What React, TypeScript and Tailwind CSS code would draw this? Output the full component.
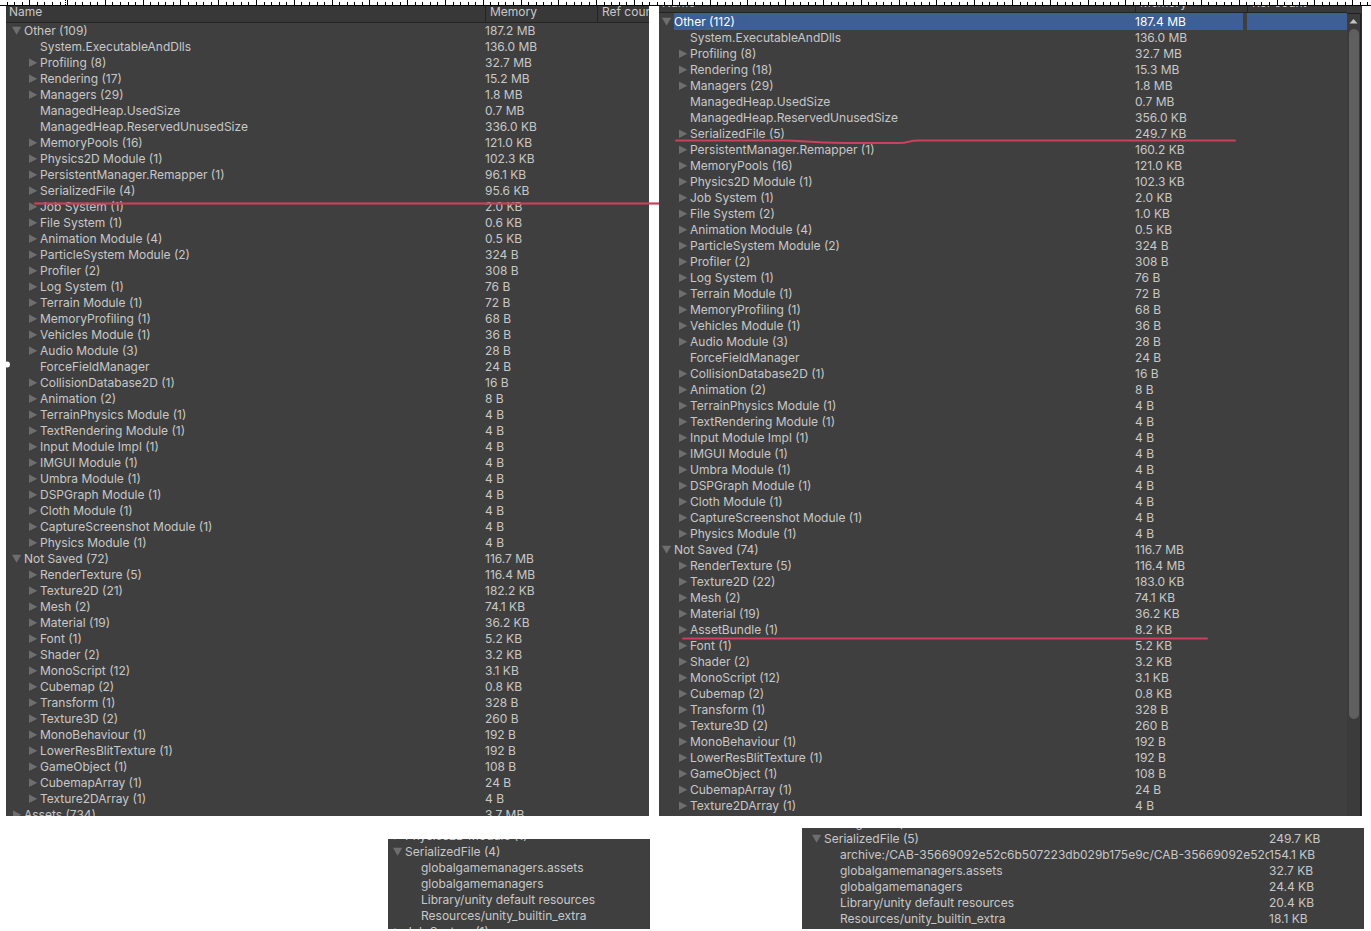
import React from 'react';
import clsx from 'clsx';

interface MemoryRow {
  name: string;
  memory: string;
  depth: 0 | 1;
  fold?: 'open' | 'closed';
  selected?: boolean;
}

const group = (name: string, memory: string, selected = false): MemoryRow => ({ name, memory, depth: 0, fold: 'open', selected });
const item = (name: string, memory: string): MemoryRow => ({ name, memory, depth: 1, fold: 'closed' });
const leaf = (name: string, memory: string): MemoryRow => ({ name, memory, depth: 1 });

const beforeRows: MemoryRow[] = [
  group('Other (109)', '187.2 MB'),
  leaf('System.ExecutableAndDlls', '136.0 MB'),
  item('Profiling (8)', '32.7 MB'),
  item('Rendering (17)', '15.2 MB'),
  item('Managers (29)', '1.8 MB'),
  leaf('ManagedHeap.UsedSize', '0.7 MB'),
  leaf('ManagedHeap.ReservedUnusedSize', '336.0 KB'),
  item('MemoryPools (16)', '121.0 KB'),
  item('Physics2D Module (1)', '102.3 KB'),
  item('PersistentManager.Remapper (1)', '96.1 KB'),
  item('SerializedFile (4)', '95.6 KB'),
  item('Job System (1)', '2.0 KB'),
  item('File System (1)', '0.6 KB'),
  item('Animation Module (4)', '0.5 KB'),
  item('ParticleSystem Module (2)', '324 B'),
  item('Profiler (2)', '308 B'),
  item('Log System (1)', '76 B'),
  item('Terrain Module (1)', '72 B'),
  item('MemoryProfiling (1)', '68 B'),
  item('Vehicles Module (1)', '36 B'),
  item('Audio Module (3)', '28 B'),
  leaf('ForceFieldManager', '24 B'),
  item('CollisionDatabase2D (1)', '16 B'),
  item('Animation (2)', '8 B'),
  item('TerrainPhysics Module (1)', '4 B'),
  item('TextRendering Module (1)', '4 B'),
  item('Input Module Impl (1)', '4 B'),
  item('IMGUI Module (1)', '4 B'),
  item('Umbra Module (1)', '4 B'),
  item('DSPGraph Module (1)', '4 B'),
  item('Cloth Module (1)', '4 B'),
  item('CaptureScreenshot Module (1)', '4 B'),
  item('Physics Module (1)', '4 B'),
  group('Not Saved (72)', '116.7 MB'),
  item('RenderTexture (5)', '116.4 MB'),
  item('Texture2D (21)', '182.2 KB'),
  item('Mesh (2)', '74.1 KB'),
  item('Material (19)', '36.2 KB'),
  item('Font (1)', '5.2 KB'),
  item('Shader (2)', '3.2 KB'),
  item('MonoScript (12)', '3.1 KB'),
  item('Cubemap (2)', '0.8 KB'),
  item('Transform (1)', '328 B'),
  item('Texture3D (2)', '260 B'),
  item('MonoBehaviour (1)', '192 B'),
  item('LowerResBlitTexture (1)', '192 B'),
  item('GameObject (1)', '108 B'),
  item('CubemapArray (1)', '24 B'),
  item('Texture2DArray (1)', '4 B'),
  { name: 'Assets (734)', memory: '3.7 MB', depth: 0, fold: 'closed' },
];

const afterRows: MemoryRow[] = [
  group('Other (112)', '187.4 MB', true),
  leaf('System.ExecutableAndDlls', '136.0 MB'),
  item('Profiling (8)', '32.7 MB'),
  item('Rendering (18)', '15.3 MB'),
  item('Managers (29)', '1.8 MB'),
  leaf('ManagedHeap.UsedSize', '0.7 MB'),
  leaf('ManagedHeap.ReservedUnusedSize', '356.0 KB'),
  item('SerializedFile (5)', '249.7 KB'),
  item('PersistentManager.Remapper (1)', '160.2 KB'),
  item('MemoryPools (16)', '121.0 KB'),
  item('Physics2D Module (1)', '102.3 KB'),
  item('Job System (1)', '2.0 KB'),
  item('File System (2)', '1.0 KB'),
  item('Animation Module (4)', '0.5 KB'),
  item('ParticleSystem Module (2)', '324 B'),
  item('Profiler (2)', '308 B'),
  item('Log System (1)', '76 B'),
  item('Terrain Module (1)', '72 B'),
  item('MemoryProfiling (1)', '68 B'),
  item('Vehicles Module (1)', '36 B'),
  item('Audio Module (3)', '28 B'),
  leaf('ForceFieldManager', '24 B'),
  item('CollisionDatabase2D (1)', '16 B'),
  item('Animation (2)', '8 B'),
  item('TerrainPhysics Module (1)', '4 B'),
  item('TextRendering Module (1)', '4 B'),
  item('Input Module Impl (1)', '4 B'),
  item('IMGUI Module (1)', '4 B'),
  item('Umbra Module (1)', '4 B'),
  item('DSPGraph Module (1)', '4 B'),
  item('Cloth Module (1)', '4 B'),
  item('CaptureScreenshot Module (1)', '4 B'),
  item('Physics Module (1)', '4 B'),
  group('Not Saved (74)', '116.7 MB'),
  item('RenderTexture (5)', '116.4 MB'),
  item('Texture2D (22)', '183.0 KB'),
  item('Mesh (2)', '74.1 KB'),
  item('Material (19)', '36.2 KB'),
  item('AssetBundle (1)', '8.2 KB'),
  item('Font (1)', '5.2 KB'),
  item('Shader (2)', '3.2 KB'),
  item('MonoScript (12)', '3.1 KB'),
  item('Cubemap (2)', '0.8 KB'),
  item('Transform (1)', '328 B'),
  item('Texture3D (2)', '260 B'),
  item('MonoBehaviour (1)', '192 B'),
  item('LowerResBlitTexture (1)', '192 B'),
  item('GameObject (1)', '108 B'),
  item('CubemapArray (1)', '24 B'),
  item('Texture2DArray (1)', '4 B'),
];

const beforeFiles: MemoryRow[] = [
  { name: 'Physics2D Module (1)', memory: '', depth: 0, fold: 'closed' },
  group('SerializedFile (4)', ''),
  leaf('globalgamemanagers.assets', ''),
  leaf('globalgamemanagers', ''),
  leaf('Library/unity default resources', ''),
  leaf('Resources/unity_builtin_extra', ''),
  { name: 'Job System (1)', memory: '', depth: 0, fold: 'closed' },
];

const afterFiles: MemoryRow[] = [
  { name: 'ManagedHeap.ReservedUnusedSize', memory: '', depth: 0 },
  group('SerializedFile (5)', '249.7 KB'),
  leaf('archive:/CAB-35669092e52c6b507223db029b175e9c/CAB-35669092e52c', '154.1 KB'),
  leaf('globalgamemanagers.assets', '32.7 KB'),
  leaf('globalgamemanagers', '24.4 KB'),
  leaf('Library/unity default resources', '20.4 KB'),
  leaf('Resources/unity_builtin_extra', '18.1 KB'),
];

const FoldArrow: React.FC<{ open: boolean; label: string }> = ({ open, label }) => (
  <button type="button" aria-label={label} aria-expanded={open} className="block w-3 h-4 shrink-0">
    <svg width="12" height="16" viewBox="0 0 12 16" fill="#6e6e6e" aria-hidden="true">
      {open ? <path d="M0 3.800h9.200L4.600 11.800z" /> : <path d="M1 3.500v8.500L9.300 7.750z" />}
    </svg>
  </button>
);

interface MemoryTableProps {
  rows: MemoryRow[];
  // left padding for depth 0 and depth 1
  indent: [string, string];
  columns: string[];
  headClass?: string;
  className?: string;
}

const MemoryTable: React.FC<MemoryTableProps> = ({ rows, indent, columns, headClass, className }) => (
  <table className={clsx('w-full table-fixed border-separate border-spacing-0 text-left', className)}>
    <colgroup>
      {columns.map((width, i) => <col key={i} className={width} />)}
    </colgroup>
    {headClass && (
      <thead className="bg-[#383838]">
        <tr>
          {['Name', 'Memory', 'Ref count'].map((title, i) => (
            <th
              key={title}
              scope="col"
              className={clsx(
                'p-0 font-normal border-b border-[#232323] overflow-hidden whitespace-nowrap',
                i > 0 && 'border-l'
              )}
            >
              <div className={clsx(i > 0 ? 'pl-1' : 'pl-[3px]', headClass)}>{title}</div>
            </th>
          ))}
        </tr>
      </thead>
    )}
    <tbody>
      {rows.map((row) => (
        <tr key={row.name} className={clsx(row.selected ? 'h-[17px] text-white' : 'h-4')}>
          <td className="p-0 overflow-hidden whitespace-nowrap">
            <div className={clsx('flex items-end', indent[row.depth])}>
              {row.fold ? <FoldArrow open={row.fold === 'open'} label={row.name} /> : <span className="w-3 shrink-0" />}
              <span className={clsx('flex-1', row.selected && 'pt-px bg-[#3e5f96]')}>{row.name}</span>
            </div>
          </td>
          {columns.length > 1 && (
            <td className="p-0 overflow-hidden whitespace-nowrap">
              <div className={clsx(row.selected && 'mr-1 pt-px bg-[#3e5f96]')}>{row.memory}</div>
            </td>
          )}
          {columns.length > 2 && <td className={clsx('p-0', row.selected && 'bg-[#3e5f96]')} />}
        </tr>
      ))}
    </tbody>
  </table>
);

const TICK = 7.559;

const Ruler: React.FC = () => (
  <svg className="block w-full h-[6px]" shapeRendering="crispEdges" aria-hidden="true">
    {Array.from({ length: 500 }, (_, i) => {
      // every fifth tick is a full centimetre
      const major = i % 5 === 3;
      return <rect key={i} x={Math.round(6.6 + i * TICK)} y={major ? 0 : 2} width="1" height={major ? 5 : 3} fill="#000" />;
    })}
    <path d="M65.5 0v5" stroke="#000" strokeDasharray="1 1" />
    <rect x="0" y="5" width="100%" height="1" fill="#000" />
  </svg>
);

const ScrollRail: React.FC = () => (
  <div className="flex w-[15px] shrink-0 flex-col items-center border-r border-[#333333] bg-[#3b3b3b] pt-[7px]">
    <div className="flex w-full flex-1 flex-col items-center border-r border-t border-[#202020]">
      <button type="button" aria-label="Scroll up" className="block h-[15px] w-full">
        <svg className="mx-auto" width="9" height="15" viewBox="0 0 9 15" fill="#c4c4c4" aria-hidden="true">
          <path d="M0.500 9.500L4.500 5l4 4.500z" />
        </svg>
      </button>
      <div className="h-[690px] w-[10px] rounded-full bg-[#5f5f5f]" />
    </div>
  </div>
);

const App: React.FC = () => {
  return (
    <div className="min-h-screen overflow-hidden bg-white font-['Inter','Liberation_Sans',sans-serif] text-[12px] leading-4 text-[#c8c8c8]">
      <Ruler />
      <main className="flex gap-[9px] pl-[6px] pr-[9px]">
        {/* First capture */}
        <div className="flex min-w-0 flex-[644] flex-col gap-[23px]">
          <section className="relative mr-px">
            <div className="overflow-hidden bg-[#3f3f3f]">
              <MemoryTable
                rows={beforeRows}
                indent={['pl-[6px]', 'pl-[22px]']}
                columns={['w-auto', 'w-[112px]', 'w-[52px]']}
                headClass="-mt-[2px] h-[18px]"
                className="-mb-[7px]"
              />
            </div>
            <svg className="absolute left-0 top-0 h-full w-full overflow-visible" aria-hidden="true">
              <circle cx="1" cy="358.5" r="3" fill="#fff" />
              <rect x="28" y="196" width="626" height="3" rx="1" fill="#c8415a" fillOpacity="0.6" />
              <rect x="28" y="197" width="626" height="1" fill="#c8415a" />
            </svg>
          </section>
          <section className="ml-auto w-[262px] overflow-hidden bg-[#3f3f3f]">
            <MemoryTable
              rows={beforeFiles}
              indent={['pl-[5px]', 'pl-[21px]']}
              columns={['w-auto']}
              className="-mt-[11px] -mb-[11px]"
            />
          </section>
        </div>

        {/* Second capture */}
        <div className="flex min-w-0 flex-[703] flex-col gap-3">
          <section className="relative">
            <div className="flex overflow-hidden bg-[#3f3f3f]">
              <div className="min-w-0 flex-1 pb-[2px]">
                <MemoryTable
                  rows={afterRows}
                  indent={['pl-[3px]', 'pl-[19px]']}
                  columns={['w-auto', 'w-[112px]', 'w-[100px]']}
                  headClass="-mt-px h-[17px]"
                  className="-mt-[10px]"
                />
              </div>
              <ScrollRail />
            </div>
            <svg className="absolute left-0 top-0 h-full w-full overflow-visible" fill="none" stroke="#cc415b" strokeWidth="2" strokeLinecap="round" aria-hidden="true">
              <path d="M17 134.500H128C142 134.500 150 137 186 137H240C251 137 248 134.500 260 134.500H576" />
              <path d="M24 632.500H548" />
            </svg>
          </section>
          <section className="-mr-[2px] ml-auto w-[562px] overflow-hidden bg-[#3f3f3f] pb-[2px]">
            <MemoryTable
              rows={afterFiles}
              indent={['pl-[10px]', 'pl-[26px]']}
              columns={['w-auto', 'w-[95px]']}
              className="-mt-[13px]"
            />
          </section>
        </div>
      </main>
    </div>
  );
};

export default App;
